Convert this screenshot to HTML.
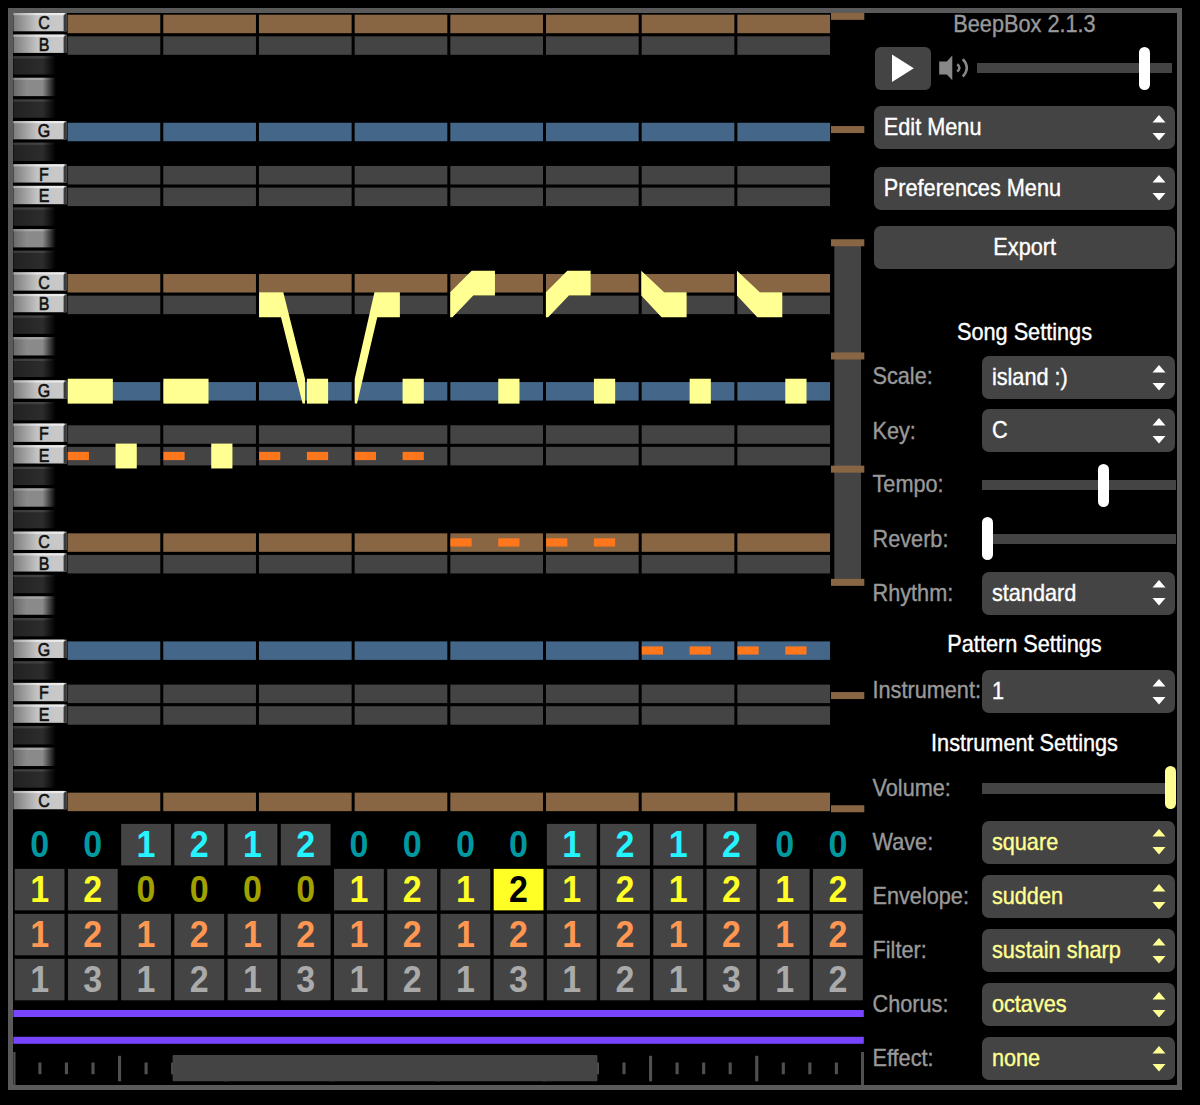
<!DOCTYPE html>
<html><head><meta charset="utf-8"><style>
html,body{margin:0;padding:0;background:#000;width:1200px;height:1105px;overflow:hidden}
body{position:relative;font-family:"Liberation Sans",sans-serif}
.lbl,.hdr,.sel span{-webkit-text-stroke:0.35px currentColor;transform:scaleY(1.06);transform-origin:0 19px}
.abs{position:absolute}
.frame{position:absolute;left:8px;top:8px;width:1173.5px;height:1082px;box-sizing:border-box;border:5px solid #5a5a5a}
.key{position:absolute;left:24.4px;width:40px;text-align:center;font-size:17.8px;line-height:18px;color:#111;-webkit-text-stroke:0.6px #111;transform:scaleX(0.9)}
.td{position:absolute;width:49.8px;height:41.5px;line-height:41.5px;text-align:center;font-size:34px;font-weight:bold;transform:scaleY(1.075)}
.lbl{position:absolute;left:872.5px;margin-top:0.7px;font-size:21.7px;color:#999;line-height:24px;white-space:nowrap}
.hdr{position:absolute;left:869.5px;width:310px;text-align:center;font-size:21.7px;color:#fff;line-height:24px}
.sel{position:absolute;background:#444;border-radius:7px;color:#fff;font-size:21.7px;line-height:24px;white-space:nowrap}
.sel span{position:absolute;left:9.5px;top:10px}
.sel svg{position:absolute;right:9.5px;top:8.5px}
.track{position:absolute;background:#444;height:10.5px}
.thumb{position:absolute;background:#fff;width:11px;border-radius:5.5px}
</style></head><body>
<div class="frame"></div>
<svg class="abs" style="left:0;top:0" width="1200" height="1105" viewBox="0 0 1200 1105">
<defs>
<linearGradient id="gw" x1="13.4" x2="66.4" gradientUnits="userSpaceOnUse"><stop offset="0" stop-color="#7c7c7c"/><stop offset="0.45" stop-color="#c4c4c4"/><stop offset="1" stop-color="#cacaca"/></linearGradient>
<linearGradient id="gwh" x1="13.4" x2="66.4" gradientUnits="userSpaceOnUse"><stop offset="0" stop-color="#a8a8a8"/><stop offset="0.45" stop-color="#e6e6e6"/><stop offset="1" stop-color="#eeeeee"/></linearGradient>
<linearGradient id="gm" x1="13.4" x2="66.4" gradientUnits="userSpaceOnUse"><stop offset="0" stop-color="#6a6a6a"/><stop offset="0.25" stop-color="#8a8a8a"/><stop offset="0.55" stop-color="#8a8a8a"/><stop offset="0.8" stop-color="#000"/></linearGradient>
<linearGradient id="gmh" x1="13.4" x2="66.4" gradientUnits="userSpaceOnUse"><stop offset="0" stop-color="#888"/><stop offset="0.3" stop-color="#a8a8a8"/><stop offset="0.55" stop-color="#a8a8a8"/><stop offset="0.8" stop-color="#000"/></linearGradient>
<linearGradient id="gd" x1="13.4" x2="66.4" gradientUnits="userSpaceOnUse"><stop offset="0" stop-color="#222"/><stop offset="0.55" stop-color="#2c2c2c"/><stop offset="0.8" stop-color="#000"/></linearGradient>
<linearGradient id="gdh" x1="13.4" x2="66.4" gradientUnits="userSpaceOnUse"><stop offset="0" stop-color="#3a3a3a"/><stop offset="0.55" stop-color="#444"/><stop offset="0.8" stop-color="#000"/></linearGradient>
</defs>
<rect x="13.4" y="13" width="53" height="18.3" fill="url(#gw)"/>
<rect x="13.4" y="13" width="50.5" height="2.2" fill="url(#gwh)"/>
<polygon points="63.6,15.4 66.4,13 66.4,31.3 63.6,31.3" fill="#3a3a3a"/>
<rect x="67.6" y="14.7" width="92.68" height="18.5" fill="#886644"/>
<rect x="163.28" y="14.7" width="92.68" height="18.5" fill="#886644"/>
<rect x="258.96" y="14.7" width="92.68" height="18.5" fill="#886644"/>
<rect x="354.64" y="14.7" width="92.68" height="18.5" fill="#886644"/>
<rect x="450.32" y="14.7" width="92.68" height="18.5" fill="#886644"/>
<rect x="546" y="14.7" width="92.68" height="18.5" fill="#886644"/>
<rect x="641.68" y="14.7" width="92.68" height="18.5" fill="#886644"/>
<rect x="737.36" y="14.7" width="92.68" height="18.5" fill="#886644"/>
<rect x="13.4" y="34.61" width="53" height="18.3" fill="url(#gw)"/>
<rect x="13.4" y="34.61" width="50.5" height="2.2" fill="url(#gwh)"/>
<polygon points="63.6,37.01 66.4,34.61 66.4,52.91 63.6,52.91" fill="#3a3a3a"/>
<rect x="67.6" y="36.31" width="92.68" height="18.5" fill="#444444"/>
<rect x="163.28" y="36.31" width="92.68" height="18.5" fill="#444444"/>
<rect x="258.96" y="36.31" width="92.68" height="18.5" fill="#444444"/>
<rect x="354.64" y="36.31" width="92.68" height="18.5" fill="#444444"/>
<rect x="450.32" y="36.31" width="92.68" height="18.5" fill="#444444"/>
<rect x="546" y="36.31" width="92.68" height="18.5" fill="#444444"/>
<rect x="641.68" y="36.31" width="92.68" height="18.5" fill="#444444"/>
<rect x="737.36" y="36.31" width="92.68" height="18.5" fill="#444444"/>
<rect x="13.4" y="56.22" width="53" height="18.3" fill="url(#gd)"/>
<rect x="13.4" y="56.22" width="53" height="2.2" fill="url(#gdh)"/>
<rect x="13.4" y="77.83" width="53" height="18.3" fill="url(#gm)"/>
<rect x="13.4" y="77.83" width="53" height="2.2" fill="url(#gmh)"/>
<rect x="13.4" y="99.44" width="53" height="18.3" fill="url(#gd)"/>
<rect x="13.4" y="99.44" width="53" height="2.2" fill="url(#gdh)"/>
<rect x="13.4" y="121.05" width="53" height="18.3" fill="url(#gw)"/>
<rect x="13.4" y="121.05" width="50.5" height="2.2" fill="url(#gwh)"/>
<polygon points="63.6,123.45 66.4,121.05 66.4,139.35 63.6,139.35" fill="#3a3a3a"/>
<rect x="67.6" y="122.75" width="92.68" height="18.5" fill="#446688"/>
<rect x="163.28" y="122.75" width="92.68" height="18.5" fill="#446688"/>
<rect x="258.96" y="122.75" width="92.68" height="18.5" fill="#446688"/>
<rect x="354.64" y="122.75" width="92.68" height="18.5" fill="#446688"/>
<rect x="450.32" y="122.75" width="92.68" height="18.5" fill="#446688"/>
<rect x="546" y="122.75" width="92.68" height="18.5" fill="#446688"/>
<rect x="641.68" y="122.75" width="92.68" height="18.5" fill="#446688"/>
<rect x="737.36" y="122.75" width="92.68" height="18.5" fill="#446688"/>
<rect x="13.4" y="142.66" width="53" height="18.3" fill="url(#gd)"/>
<rect x="13.4" y="142.66" width="53" height="2.2" fill="url(#gdh)"/>
<rect x="13.4" y="164.27" width="53" height="18.3" fill="url(#gw)"/>
<rect x="13.4" y="164.27" width="50.5" height="2.2" fill="url(#gwh)"/>
<polygon points="63.6,166.67 66.4,164.27 66.4,182.57 63.6,182.57" fill="#3a3a3a"/>
<rect x="67.6" y="165.97" width="92.68" height="18.5" fill="#444444"/>
<rect x="163.28" y="165.97" width="92.68" height="18.5" fill="#444444"/>
<rect x="258.96" y="165.97" width="92.68" height="18.5" fill="#444444"/>
<rect x="354.64" y="165.97" width="92.68" height="18.5" fill="#444444"/>
<rect x="450.32" y="165.97" width="92.68" height="18.5" fill="#444444"/>
<rect x="546" y="165.97" width="92.68" height="18.5" fill="#444444"/>
<rect x="641.68" y="165.97" width="92.68" height="18.5" fill="#444444"/>
<rect x="737.36" y="165.97" width="92.68" height="18.5" fill="#444444"/>
<rect x="13.4" y="185.88" width="53" height="18.3" fill="url(#gw)"/>
<rect x="13.4" y="185.88" width="50.5" height="2.2" fill="url(#gwh)"/>
<polygon points="63.6,188.28 66.4,185.88 66.4,204.18 63.6,204.18" fill="#3a3a3a"/>
<rect x="67.6" y="187.58" width="92.68" height="18.5" fill="#444444"/>
<rect x="163.28" y="187.58" width="92.68" height="18.5" fill="#444444"/>
<rect x="258.96" y="187.58" width="92.68" height="18.5" fill="#444444"/>
<rect x="354.64" y="187.58" width="92.68" height="18.5" fill="#444444"/>
<rect x="450.32" y="187.58" width="92.68" height="18.5" fill="#444444"/>
<rect x="546" y="187.58" width="92.68" height="18.5" fill="#444444"/>
<rect x="641.68" y="187.58" width="92.68" height="18.5" fill="#444444"/>
<rect x="737.36" y="187.58" width="92.68" height="18.5" fill="#444444"/>
<rect x="13.4" y="207.49" width="53" height="18.3" fill="url(#gd)"/>
<rect x="13.4" y="207.49" width="53" height="2.2" fill="url(#gdh)"/>
<rect x="13.4" y="229.1" width="53" height="18.3" fill="url(#gm)"/>
<rect x="13.4" y="229.1" width="53" height="2.2" fill="url(#gmh)"/>
<rect x="13.4" y="250.71" width="53" height="18.3" fill="url(#gd)"/>
<rect x="13.4" y="250.71" width="53" height="2.2" fill="url(#gdh)"/>
<rect x="13.4" y="272.32" width="53" height="18.3" fill="url(#gw)"/>
<rect x="13.4" y="272.32" width="50.5" height="2.2" fill="url(#gwh)"/>
<polygon points="63.6,274.72 66.4,272.32 66.4,290.62 63.6,290.62" fill="#3a3a3a"/>
<rect x="67.6" y="274.02" width="92.68" height="18.5" fill="#886644"/>
<rect x="163.28" y="274.02" width="92.68" height="18.5" fill="#886644"/>
<rect x="258.96" y="274.02" width="92.68" height="18.5" fill="#886644"/>
<rect x="354.64" y="274.02" width="92.68" height="18.5" fill="#886644"/>
<rect x="450.32" y="274.02" width="92.68" height="18.5" fill="#886644"/>
<rect x="546" y="274.02" width="92.68" height="18.5" fill="#886644"/>
<rect x="641.68" y="274.02" width="92.68" height="18.5" fill="#886644"/>
<rect x="737.36" y="274.02" width="92.68" height="18.5" fill="#886644"/>
<rect x="13.4" y="293.93" width="53" height="18.3" fill="url(#gw)"/>
<rect x="13.4" y="293.93" width="50.5" height="2.2" fill="url(#gwh)"/>
<polygon points="63.6,296.33 66.4,293.93 66.4,312.23 63.6,312.23" fill="#3a3a3a"/>
<rect x="67.6" y="295.63" width="92.68" height="18.5" fill="#444444"/>
<rect x="163.28" y="295.63" width="92.68" height="18.5" fill="#444444"/>
<rect x="258.96" y="295.63" width="92.68" height="18.5" fill="#444444"/>
<rect x="354.64" y="295.63" width="92.68" height="18.5" fill="#444444"/>
<rect x="450.32" y="295.63" width="92.68" height="18.5" fill="#444444"/>
<rect x="546" y="295.63" width="92.68" height="18.5" fill="#444444"/>
<rect x="641.68" y="295.63" width="92.68" height="18.5" fill="#444444"/>
<rect x="737.36" y="295.63" width="92.68" height="18.5" fill="#444444"/>
<rect x="13.4" y="315.54" width="53" height="18.3" fill="url(#gd)"/>
<rect x="13.4" y="315.54" width="53" height="2.2" fill="url(#gdh)"/>
<rect x="13.4" y="337.15" width="53" height="18.3" fill="url(#gm)"/>
<rect x="13.4" y="337.15" width="53" height="2.2" fill="url(#gmh)"/>
<rect x="13.4" y="358.76" width="53" height="18.3" fill="url(#gd)"/>
<rect x="13.4" y="358.76" width="53" height="2.2" fill="url(#gdh)"/>
<rect x="13.4" y="380.37" width="53" height="18.3" fill="url(#gw)"/>
<rect x="13.4" y="380.37" width="50.5" height="2.2" fill="url(#gwh)"/>
<polygon points="63.6,382.77 66.4,380.37 66.4,398.67 63.6,398.67" fill="#3a3a3a"/>
<rect x="67.6" y="382.07" width="92.68" height="18.5" fill="#446688"/>
<rect x="163.28" y="382.07" width="92.68" height="18.5" fill="#446688"/>
<rect x="258.96" y="382.07" width="92.68" height="18.5" fill="#446688"/>
<rect x="354.64" y="382.07" width="92.68" height="18.5" fill="#446688"/>
<rect x="450.32" y="382.07" width="92.68" height="18.5" fill="#446688"/>
<rect x="546" y="382.07" width="92.68" height="18.5" fill="#446688"/>
<rect x="641.68" y="382.07" width="92.68" height="18.5" fill="#446688"/>
<rect x="737.36" y="382.07" width="92.68" height="18.5" fill="#446688"/>
<rect x="13.4" y="401.98" width="53" height="18.3" fill="url(#gd)"/>
<rect x="13.4" y="401.98" width="53" height="2.2" fill="url(#gdh)"/>
<rect x="13.4" y="423.59" width="53" height="18.3" fill="url(#gw)"/>
<rect x="13.4" y="423.59" width="50.5" height="2.2" fill="url(#gwh)"/>
<polygon points="63.6,425.99 66.4,423.59 66.4,441.89 63.6,441.89" fill="#3a3a3a"/>
<rect x="67.6" y="425.29" width="92.68" height="18.5" fill="#444444"/>
<rect x="163.28" y="425.29" width="92.68" height="18.5" fill="#444444"/>
<rect x="258.96" y="425.29" width="92.68" height="18.5" fill="#444444"/>
<rect x="354.64" y="425.29" width="92.68" height="18.5" fill="#444444"/>
<rect x="450.32" y="425.29" width="92.68" height="18.5" fill="#444444"/>
<rect x="546" y="425.29" width="92.68" height="18.5" fill="#444444"/>
<rect x="641.68" y="425.29" width="92.68" height="18.5" fill="#444444"/>
<rect x="737.36" y="425.29" width="92.68" height="18.5" fill="#444444"/>
<rect x="13.4" y="445.2" width="53" height="18.3" fill="url(#gw)"/>
<rect x="13.4" y="445.2" width="50.5" height="2.2" fill="url(#gwh)"/>
<polygon points="63.6,447.6 66.4,445.2 66.4,463.5 63.6,463.5" fill="#3a3a3a"/>
<rect x="67.6" y="446.9" width="92.68" height="18.5" fill="#444444"/>
<rect x="163.28" y="446.9" width="92.68" height="18.5" fill="#444444"/>
<rect x="258.96" y="446.9" width="92.68" height="18.5" fill="#444444"/>
<rect x="354.64" y="446.9" width="92.68" height="18.5" fill="#444444"/>
<rect x="450.32" y="446.9" width="92.68" height="18.5" fill="#444444"/>
<rect x="546" y="446.9" width="92.68" height="18.5" fill="#444444"/>
<rect x="641.68" y="446.9" width="92.68" height="18.5" fill="#444444"/>
<rect x="737.36" y="446.9" width="92.68" height="18.5" fill="#444444"/>
<rect x="13.4" y="466.81" width="53" height="18.3" fill="url(#gd)"/>
<rect x="13.4" y="466.81" width="53" height="2.2" fill="url(#gdh)"/>
<rect x="13.4" y="488.42" width="53" height="18.3" fill="url(#gm)"/>
<rect x="13.4" y="488.42" width="53" height="2.2" fill="url(#gmh)"/>
<rect x="13.4" y="510.03" width="53" height="18.3" fill="url(#gd)"/>
<rect x="13.4" y="510.03" width="53" height="2.2" fill="url(#gdh)"/>
<rect x="13.4" y="531.64" width="53" height="18.3" fill="url(#gw)"/>
<rect x="13.4" y="531.64" width="50.5" height="2.2" fill="url(#gwh)"/>
<polygon points="63.6,534.04 66.4,531.64 66.4,549.94 63.6,549.94" fill="#3a3a3a"/>
<rect x="67.6" y="533.34" width="92.68" height="18.5" fill="#886644"/>
<rect x="163.28" y="533.34" width="92.68" height="18.5" fill="#886644"/>
<rect x="258.96" y="533.34" width="92.68" height="18.5" fill="#886644"/>
<rect x="354.64" y="533.34" width="92.68" height="18.5" fill="#886644"/>
<rect x="450.32" y="533.34" width="92.68" height="18.5" fill="#886644"/>
<rect x="546" y="533.34" width="92.68" height="18.5" fill="#886644"/>
<rect x="641.68" y="533.34" width="92.68" height="18.5" fill="#886644"/>
<rect x="737.36" y="533.34" width="92.68" height="18.5" fill="#886644"/>
<rect x="13.4" y="553.25" width="53" height="18.3" fill="url(#gw)"/>
<rect x="13.4" y="553.25" width="50.5" height="2.2" fill="url(#gwh)"/>
<polygon points="63.6,555.65 66.4,553.25 66.4,571.55 63.6,571.55" fill="#3a3a3a"/>
<rect x="67.6" y="554.95" width="92.68" height="18.5" fill="#444444"/>
<rect x="163.28" y="554.95" width="92.68" height="18.5" fill="#444444"/>
<rect x="258.96" y="554.95" width="92.68" height="18.5" fill="#444444"/>
<rect x="354.64" y="554.95" width="92.68" height="18.5" fill="#444444"/>
<rect x="450.32" y="554.95" width="92.68" height="18.5" fill="#444444"/>
<rect x="546" y="554.95" width="92.68" height="18.5" fill="#444444"/>
<rect x="641.68" y="554.95" width="92.68" height="18.5" fill="#444444"/>
<rect x="737.36" y="554.95" width="92.68" height="18.5" fill="#444444"/>
<rect x="13.4" y="574.86" width="53" height="18.3" fill="url(#gd)"/>
<rect x="13.4" y="574.86" width="53" height="2.2" fill="url(#gdh)"/>
<rect x="13.4" y="596.47" width="53" height="18.3" fill="url(#gm)"/>
<rect x="13.4" y="596.47" width="53" height="2.2" fill="url(#gmh)"/>
<rect x="13.4" y="618.08" width="53" height="18.3" fill="url(#gd)"/>
<rect x="13.4" y="618.08" width="53" height="2.2" fill="url(#gdh)"/>
<rect x="13.4" y="639.69" width="53" height="18.3" fill="url(#gw)"/>
<rect x="13.4" y="639.69" width="50.5" height="2.2" fill="url(#gwh)"/>
<polygon points="63.6,642.09 66.4,639.69 66.4,657.99 63.6,657.99" fill="#3a3a3a"/>
<rect x="67.6" y="641.39" width="92.68" height="18.5" fill="#446688"/>
<rect x="163.28" y="641.39" width="92.68" height="18.5" fill="#446688"/>
<rect x="258.96" y="641.39" width="92.68" height="18.5" fill="#446688"/>
<rect x="354.64" y="641.39" width="92.68" height="18.5" fill="#446688"/>
<rect x="450.32" y="641.39" width="92.68" height="18.5" fill="#446688"/>
<rect x="546" y="641.39" width="92.68" height="18.5" fill="#446688"/>
<rect x="641.68" y="641.39" width="92.68" height="18.5" fill="#446688"/>
<rect x="737.36" y="641.39" width="92.68" height="18.5" fill="#446688"/>
<rect x="13.4" y="661.3" width="53" height="18.3" fill="url(#gd)"/>
<rect x="13.4" y="661.3" width="53" height="2.2" fill="url(#gdh)"/>
<rect x="13.4" y="682.91" width="53" height="18.3" fill="url(#gw)"/>
<rect x="13.4" y="682.91" width="50.5" height="2.2" fill="url(#gwh)"/>
<polygon points="63.6,685.31 66.4,682.91 66.4,701.21 63.6,701.21" fill="#3a3a3a"/>
<rect x="67.6" y="684.61" width="92.68" height="18.5" fill="#444444"/>
<rect x="163.28" y="684.61" width="92.68" height="18.5" fill="#444444"/>
<rect x="258.96" y="684.61" width="92.68" height="18.5" fill="#444444"/>
<rect x="354.64" y="684.61" width="92.68" height="18.5" fill="#444444"/>
<rect x="450.32" y="684.61" width="92.68" height="18.5" fill="#444444"/>
<rect x="546" y="684.61" width="92.68" height="18.5" fill="#444444"/>
<rect x="641.68" y="684.61" width="92.68" height="18.5" fill="#444444"/>
<rect x="737.36" y="684.61" width="92.68" height="18.5" fill="#444444"/>
<rect x="13.4" y="704.52" width="53" height="18.3" fill="url(#gw)"/>
<rect x="13.4" y="704.52" width="50.5" height="2.2" fill="url(#gwh)"/>
<polygon points="63.6,706.92 66.4,704.52 66.4,722.82 63.6,722.82" fill="#3a3a3a"/>
<rect x="67.6" y="706.22" width="92.68" height="18.5" fill="#444444"/>
<rect x="163.28" y="706.22" width="92.68" height="18.5" fill="#444444"/>
<rect x="258.96" y="706.22" width="92.68" height="18.5" fill="#444444"/>
<rect x="354.64" y="706.22" width="92.68" height="18.5" fill="#444444"/>
<rect x="450.32" y="706.22" width="92.68" height="18.5" fill="#444444"/>
<rect x="546" y="706.22" width="92.68" height="18.5" fill="#444444"/>
<rect x="641.68" y="706.22" width="92.68" height="18.5" fill="#444444"/>
<rect x="737.36" y="706.22" width="92.68" height="18.5" fill="#444444"/>
<rect x="13.4" y="726.13" width="53" height="18.3" fill="url(#gd)"/>
<rect x="13.4" y="726.13" width="53" height="2.2" fill="url(#gdh)"/>
<rect x="13.4" y="747.74" width="53" height="18.3" fill="url(#gm)"/>
<rect x="13.4" y="747.74" width="53" height="2.2" fill="url(#gmh)"/>
<rect x="13.4" y="769.35" width="53" height="18.3" fill="url(#gd)"/>
<rect x="13.4" y="769.35" width="53" height="2.2" fill="url(#gdh)"/>
<rect x="13.4" y="790.96" width="53" height="18.3" fill="url(#gw)"/>
<rect x="13.4" y="790.96" width="50.5" height="2.2" fill="url(#gwh)"/>
<polygon points="63.6,793.36 66.4,790.96 66.4,809.26 63.6,809.26" fill="#3a3a3a"/>
<rect x="67.6" y="792.66" width="92.68" height="18.5" fill="#886644"/>
<rect x="163.28" y="792.66" width="92.68" height="18.5" fill="#886644"/>
<rect x="258.96" y="792.66" width="92.68" height="18.5" fill="#886644"/>
<rect x="354.64" y="792.66" width="92.68" height="18.5" fill="#886644"/>
<rect x="450.32" y="792.66" width="92.68" height="18.5" fill="#886644"/>
<rect x="546" y="792.66" width="92.68" height="18.5" fill="#886644"/>
<rect x="641.68" y="792.66" width="92.68" height="18.5" fill="#886644"/>
<rect x="737.36" y="792.66" width="92.68" height="18.5" fill="#886644"/>
<rect x="115.54" y="443.56" width="21.22" height="24.9" fill="#ffff92"/>
<rect x="211.22" y="443.56" width="21.22" height="24.9" fill="#ffff92"/>
<rect x="306.9" y="378.73" width="21.22" height="24.9" fill="#ffff92"/>
<rect x="402.58" y="378.73" width="21.22" height="24.9" fill="#ffff92"/>
<rect x="498.26" y="378.73" width="21.22" height="24.9" fill="#ffff92"/>
<rect x="593.94" y="378.73" width="21.22" height="24.9" fill="#ffff92"/>
<rect x="689.62" y="378.73" width="21.22" height="24.9" fill="#ffff92"/>
<rect x="785.3" y="378.73" width="21.22" height="24.9" fill="#ffff92"/>
<rect x="67.7" y="378.73" width="45.14" height="24.9" fill="#ffff92"/>
<rect x="163.38" y="378.73" width="45.14" height="24.9" fill="#ffff92"/>
<polygon points="259.06,292.29 283.28,292.29 305,378.73 305,403.62 302.6,403.62 280.98,317.19 259.06,317.19" fill="#ffff92"/>
<polygon points="354.74,403.62 354.74,378.73 374.46,292.29 399.88,292.29 399.88,317.19 377.26,317.19 357.04,403.62" fill="#ffff92"/>
<polygon points="450.22,317.19 450.22,292.29 471.64,270.68 494.96,270.68 494.96,295.57 473.24,295.57 452.42,317.19" fill="#ffff92"/>
<polygon points="545.9,317.19 545.9,292.29 567.32,270.68 590.64,270.68 590.64,295.57 568.92,295.57 548.1,317.19" fill="#ffff92"/>
<polygon points="641.28,270.68 664.1,292.29 686.62,292.29 686.62,317.19 661.6,317.19 641.28,295.57" fill="#ffff92"/>
<polygon points="736.96,270.68 759.78,292.29 782.3,292.29 782.3,317.19 757.28,317.19 736.96,295.57" fill="#ffff92"/>
<rect x="67.7" y="451.9" width="21.22" height="8.2" fill="#ff771c"/>
<rect x="163.38" y="451.9" width="21.22" height="8.2" fill="#ff771c"/>
<rect x="259.06" y="451.9" width="21.22" height="8.2" fill="#ff771c"/>
<rect x="306.9" y="451.9" width="21.22" height="8.2" fill="#ff771c"/>
<rect x="354.74" y="451.9" width="21.22" height="8.2" fill="#ff771c"/>
<rect x="402.58" y="451.9" width="21.22" height="8.2" fill="#ff771c"/>
<rect x="450.42" y="538.34" width="21.22" height="8.2" fill="#ff771c"/>
<rect x="498.26" y="538.34" width="21.22" height="8.2" fill="#ff771c"/>
<rect x="546.1" y="538.34" width="21.22" height="8.2" fill="#ff771c"/>
<rect x="593.94" y="538.34" width="21.22" height="8.2" fill="#ff771c"/>
<rect x="641.78" y="646.39" width="21.22" height="8.2" fill="#ff771c"/>
<rect x="689.62" y="646.39" width="21.22" height="8.2" fill="#ff771c"/>
<rect x="737.46" y="646.39" width="21.22" height="8.2" fill="#ff771c"/>
<rect x="785.3" y="646.39" width="21.22" height="8.2" fill="#ff771c"/>
<rect x="834.3" y="242" width="26.7" height="341" fill="#444444"/>
<rect x="831" y="12.85" width="33.3" height="7" fill="#886644"/>
<rect x="831" y="126.05" width="33.3" height="7" fill="#886644"/>
<rect x="831" y="239.25" width="33.3" height="7" fill="#886644"/>
<rect x="831" y="352.45" width="33.3" height="7" fill="#886644"/>
<rect x="831" y="465.65" width="33.3" height="7" fill="#886644"/>
<rect x="831" y="578.85" width="33.3" height="7" fill="#886644"/>
<rect x="831" y="692.05" width="33.3" height="7" fill="#886644"/>
<rect x="831" y="805.25" width="33.3" height="7" fill="#886644"/>
<rect x="121.14" y="823.9" width="49.8" height="41.5" fill="#444444"/>
<rect x="174.36" y="823.9" width="49.8" height="41.5" fill="#444444"/>
<rect x="227.58" y="823.9" width="49.8" height="41.5" fill="#444444"/>
<rect x="280.8" y="823.9" width="49.8" height="41.5" fill="#444444"/>
<rect x="546.9" y="823.9" width="49.8" height="41.5" fill="#444444"/>
<rect x="600.12" y="823.9" width="49.8" height="41.5" fill="#444444"/>
<rect x="653.34" y="823.9" width="49.8" height="41.5" fill="#444444"/>
<rect x="706.56" y="823.9" width="49.8" height="41.5" fill="#444444"/>
<rect x="14.7" y="868.87" width="49.8" height="41.5" fill="#444444"/>
<rect x="67.92" y="868.87" width="49.8" height="41.5" fill="#444444"/>
<rect x="334.02" y="868.87" width="49.8" height="41.5" fill="#444444"/>
<rect x="387.24" y="868.87" width="49.8" height="41.5" fill="#444444"/>
<rect x="440.46" y="868.87" width="49.8" height="41.5" fill="#444444"/>
<rect x="493.68" y="868.87" width="49.8" height="41.5" fill="#ffff25"/>
<rect x="546.9" y="868.87" width="49.8" height="41.5" fill="#444444"/>
<rect x="600.12" y="868.87" width="49.8" height="41.5" fill="#444444"/>
<rect x="653.34" y="868.87" width="49.8" height="41.5" fill="#444444"/>
<rect x="706.56" y="868.87" width="49.8" height="41.5" fill="#444444"/>
<rect x="759.78" y="868.87" width="49.8" height="41.5" fill="#444444"/>
<rect x="813" y="868.87" width="49.8" height="41.5" fill="#444444"/>
<rect x="14.7" y="913.84" width="49.8" height="41.5" fill="#444444"/>
<rect x="67.92" y="913.84" width="49.8" height="41.5" fill="#444444"/>
<rect x="121.14" y="913.84" width="49.8" height="41.5" fill="#444444"/>
<rect x="174.36" y="913.84" width="49.8" height="41.5" fill="#444444"/>
<rect x="227.58" y="913.84" width="49.8" height="41.5" fill="#444444"/>
<rect x="280.8" y="913.84" width="49.8" height="41.5" fill="#444444"/>
<rect x="334.02" y="913.84" width="49.8" height="41.5" fill="#444444"/>
<rect x="387.24" y="913.84" width="49.8" height="41.5" fill="#444444"/>
<rect x="440.46" y="913.84" width="49.8" height="41.5" fill="#444444"/>
<rect x="493.68" y="913.84" width="49.8" height="41.5" fill="#444444"/>
<rect x="546.9" y="913.84" width="49.8" height="41.5" fill="#444444"/>
<rect x="600.12" y="913.84" width="49.8" height="41.5" fill="#444444"/>
<rect x="653.34" y="913.84" width="49.8" height="41.5" fill="#444444"/>
<rect x="706.56" y="913.84" width="49.8" height="41.5" fill="#444444"/>
<rect x="759.78" y="913.84" width="49.8" height="41.5" fill="#444444"/>
<rect x="813" y="913.84" width="49.8" height="41.5" fill="#444444"/>
<rect x="14.7" y="958.81" width="49.8" height="41.5" fill="#444444"/>
<rect x="67.92" y="958.81" width="49.8" height="41.5" fill="#444444"/>
<rect x="121.14" y="958.81" width="49.8" height="41.5" fill="#444444"/>
<rect x="174.36" y="958.81" width="49.8" height="41.5" fill="#444444"/>
<rect x="227.58" y="958.81" width="49.8" height="41.5" fill="#444444"/>
<rect x="280.8" y="958.81" width="49.8" height="41.5" fill="#444444"/>
<rect x="334.02" y="958.81" width="49.8" height="41.5" fill="#444444"/>
<rect x="387.24" y="958.81" width="49.8" height="41.5" fill="#444444"/>
<rect x="440.46" y="958.81" width="49.8" height="41.5" fill="#444444"/>
<rect x="493.68" y="958.81" width="49.8" height="41.5" fill="#444444"/>
<rect x="546.9" y="958.81" width="49.8" height="41.5" fill="#444444"/>
<rect x="600.12" y="958.81" width="49.8" height="41.5" fill="#444444"/>
<rect x="653.34" y="958.81" width="49.8" height="41.5" fill="#444444"/>
<rect x="706.56" y="958.81" width="49.8" height="41.5" fill="#444444"/>
<rect x="759.78" y="958.81" width="49.8" height="41.5" fill="#444444"/>
<rect x="813" y="958.81" width="49.8" height="41.5" fill="#444444"/>
<rect x="13.3" y="1010" width="850.5" height="7" fill="#7744ff"/>
<rect x="13.3" y="1036.8" width="850.5" height="7" fill="#7744ff"/>
<rect x="13.3" y="1052" width="2.2" height="33" fill="#505050"/>
<rect x="861" y="1052" width="3" height="33" fill="#505050"/>
<rect x="38.35" y="1062.5" width="3.1" height="11.7" fill="#505050"/>
<rect x="64.9" y="1062.5" width="3.1" height="11.7" fill="#505050"/>
<rect x="91.45" y="1062.5" width="3.1" height="11.7" fill="#505050"/>
<rect x="118" y="1055.8" width="3.1" height="25.5" fill="#505050"/>
<rect x="144.55" y="1062.5" width="3.1" height="11.7" fill="#505050"/>
<rect x="171.1" y="1062.5" width="3.1" height="11.7" fill="#505050"/>
<rect x="197.65" y="1062.5" width="3.1" height="11.7" fill="#505050"/>
<rect x="224.2" y="1055.8" width="3.1" height="25.5" fill="#505050"/>
<rect x="250.75" y="1062.5" width="3.1" height="11.7" fill="#505050"/>
<rect x="277.3" y="1062.5" width="3.1" height="11.7" fill="#505050"/>
<rect x="303.85" y="1062.5" width="3.1" height="11.7" fill="#505050"/>
<rect x="330.4" y="1055.8" width="3.1" height="25.5" fill="#505050"/>
<rect x="356.95" y="1062.5" width="3.1" height="11.7" fill="#505050"/>
<rect x="383.5" y="1062.5" width="3.1" height="11.7" fill="#505050"/>
<rect x="410.05" y="1062.5" width="3.1" height="11.7" fill="#505050"/>
<rect x="436.6" y="1055.8" width="3.1" height="25.5" fill="#505050"/>
<rect x="463.15" y="1062.5" width="3.1" height="11.7" fill="#505050"/>
<rect x="489.7" y="1062.5" width="3.1" height="11.7" fill="#505050"/>
<rect x="516.25" y="1062.5" width="3.1" height="11.7" fill="#505050"/>
<rect x="542.8" y="1055.8" width="3.1" height="25.5" fill="#505050"/>
<rect x="569.35" y="1062.5" width="3.1" height="11.7" fill="#505050"/>
<rect x="595.9" y="1062.5" width="3.1" height="11.7" fill="#505050"/>
<rect x="622.45" y="1062.5" width="3.1" height="11.7" fill="#505050"/>
<rect x="649" y="1055.8" width="3.1" height="25.5" fill="#505050"/>
<rect x="675.55" y="1062.5" width="3.1" height="11.7" fill="#505050"/>
<rect x="702.1" y="1062.5" width="3.1" height="11.7" fill="#505050"/>
<rect x="728.65" y="1062.5" width="3.1" height="11.7" fill="#505050"/>
<rect x="755.2" y="1055.8" width="3.1" height="25.5" fill="#505050"/>
<rect x="781.75" y="1062.5" width="3.1" height="11.7" fill="#505050"/>
<rect x="808.3" y="1062.5" width="3.1" height="11.7" fill="#505050"/>
<rect x="834.85" y="1062.5" width="3.1" height="11.7" fill="#505050"/>
<rect x="172.6" y="1055" width="424.8" height="26.3" rx="1" fill="#444444"/>
</svg>
<div class="key" style="top:14.4px">C</div>
<div class="key" style="top:36.01px">B</div>
<div class="key" style="top:122.45px">G</div>
<div class="key" style="top:165.67px">F</div>
<div class="key" style="top:187.28px">E</div>
<div class="key" style="top:273.72px">C</div>
<div class="key" style="top:295.33px">B</div>
<div class="key" style="top:381.77px">G</div>
<div class="key" style="top:424.99px">F</div>
<div class="key" style="top:446.6px">E</div>
<div class="key" style="top:533.04px">C</div>
<div class="key" style="top:554.65px">B</div>
<div class="key" style="top:641.09px">G</div>
<div class="key" style="top:684.31px">F</div>
<div class="key" style="top:705.92px">E</div>
<div class="key" style="top:792.36px">C</div>
<div class="td" style="left:14.7px;top:823.9px;color:#0099a1">0</div>
<div class="td" style="left:67.92px;top:823.9px;color:#0099a1">0</div>
<div class="td" style="left:121.14px;top:823.9px;color:#25f3ff">1</div>
<div class="td" style="left:174.36px;top:823.9px;color:#25f3ff">2</div>
<div class="td" style="left:227.58px;top:823.9px;color:#25f3ff">1</div>
<div class="td" style="left:280.8px;top:823.9px;color:#25f3ff">2</div>
<div class="td" style="left:334.02px;top:823.9px;color:#0099a1">0</div>
<div class="td" style="left:387.24px;top:823.9px;color:#0099a1">0</div>
<div class="td" style="left:440.46px;top:823.9px;color:#0099a1">0</div>
<div class="td" style="left:493.68px;top:823.9px;color:#0099a1">0</div>
<div class="td" style="left:546.9px;top:823.9px;color:#25f3ff">1</div>
<div class="td" style="left:600.12px;top:823.9px;color:#25f3ff">2</div>
<div class="td" style="left:653.34px;top:823.9px;color:#25f3ff">1</div>
<div class="td" style="left:706.56px;top:823.9px;color:#25f3ff">2</div>
<div class="td" style="left:759.78px;top:823.9px;color:#0099a1">0</div>
<div class="td" style="left:813px;top:823.9px;color:#0099a1">0</div>
<div class="td" style="left:14.7px;top:868.87px;color:#ffff25">1</div>
<div class="td" style="left:67.92px;top:868.87px;color:#ffff25">2</div>
<div class="td" style="left:121.14px;top:868.87px;color:#a1a100">0</div>
<div class="td" style="left:174.36px;top:868.87px;color:#a1a100">0</div>
<div class="td" style="left:227.58px;top:868.87px;color:#a1a100">0</div>
<div class="td" style="left:280.8px;top:868.87px;color:#a1a100">0</div>
<div class="td" style="left:334.02px;top:868.87px;color:#ffff25">1</div>
<div class="td" style="left:387.24px;top:868.87px;color:#ffff25">2</div>
<div class="td" style="left:440.46px;top:868.87px;color:#ffff25">1</div>
<div class="td" style="left:493.68px;top:868.87px;color:#000000">2</div>
<div class="td" style="left:546.9px;top:868.87px;color:#ffff25">1</div>
<div class="td" style="left:600.12px;top:868.87px;color:#ffff25">2</div>
<div class="td" style="left:653.34px;top:868.87px;color:#ffff25">1</div>
<div class="td" style="left:706.56px;top:868.87px;color:#ffff25">2</div>
<div class="td" style="left:759.78px;top:868.87px;color:#ffff25">1</div>
<div class="td" style="left:813px;top:868.87px;color:#ffff25">2</div>
<div class="td" style="left:14.7px;top:913.84px;color:#ff9752">1</div>
<div class="td" style="left:67.92px;top:913.84px;color:#ff9752">2</div>
<div class="td" style="left:121.14px;top:913.84px;color:#ff9752">1</div>
<div class="td" style="left:174.36px;top:913.84px;color:#ff9752">2</div>
<div class="td" style="left:227.58px;top:913.84px;color:#ff9752">1</div>
<div class="td" style="left:280.8px;top:913.84px;color:#ff9752">2</div>
<div class="td" style="left:334.02px;top:913.84px;color:#ff9752">1</div>
<div class="td" style="left:387.24px;top:913.84px;color:#ff9752">2</div>
<div class="td" style="left:440.46px;top:913.84px;color:#ff9752">1</div>
<div class="td" style="left:493.68px;top:913.84px;color:#ff9752">2</div>
<div class="td" style="left:546.9px;top:913.84px;color:#ff9752">1</div>
<div class="td" style="left:600.12px;top:913.84px;color:#ff9752">2</div>
<div class="td" style="left:653.34px;top:913.84px;color:#ff9752">1</div>
<div class="td" style="left:706.56px;top:913.84px;color:#ff9752">2</div>
<div class="td" style="left:759.78px;top:913.84px;color:#ff9752">1</div>
<div class="td" style="left:813px;top:913.84px;color:#ff9752">2</div>
<div class="td" style="left:14.7px;top:958.81px;color:#aaaaaa">1</div>
<div class="td" style="left:67.92px;top:958.81px;color:#aaaaaa">3</div>
<div class="td" style="left:121.14px;top:958.81px;color:#aaaaaa">1</div>
<div class="td" style="left:174.36px;top:958.81px;color:#aaaaaa">2</div>
<div class="td" style="left:227.58px;top:958.81px;color:#aaaaaa">1</div>
<div class="td" style="left:280.8px;top:958.81px;color:#aaaaaa">3</div>
<div class="td" style="left:334.02px;top:958.81px;color:#aaaaaa">1</div>
<div class="td" style="left:387.24px;top:958.81px;color:#aaaaaa">2</div>
<div class="td" style="left:440.46px;top:958.81px;color:#aaaaaa">1</div>
<div class="td" style="left:493.68px;top:958.81px;color:#aaaaaa">3</div>
<div class="td" style="left:546.9px;top:958.81px;color:#aaaaaa">1</div>
<div class="td" style="left:600.12px;top:958.81px;color:#aaaaaa">2</div>
<div class="td" style="left:653.34px;top:958.81px;color:#aaaaaa">1</div>
<div class="td" style="left:706.56px;top:958.81px;color:#aaaaaa">3</div>
<div class="td" style="left:759.78px;top:958.81px;color:#aaaaaa">1</div>
<div class="td" style="left:813px;top:958.81px;color:#aaaaaa">2</div>
<div class="hdr" style="top:13px;color:#999">BeepBox 2.1.3</div>
<div class="abs" style="left:874.5px;top:46.5px;width:56.3px;height:43px;background:#444;border-radius:6px"></div>
<svg class="abs" style="left:0;top:0" width="1200" height="100"><polygon points="892,54.5 913.8,68.2 892,82" fill="#fff"/><polygon points="939.2,61.4 946.8,61.4 952.3,55.4 952.3,80.2 946.8,74.4 939.2,74.4" fill="#888"/><path d="M957.3,64.2 Q961.6,67.8 957.3,71.6" stroke="#888" stroke-width="2.5" fill="none"/><path d="M962.8,59.2 Q970.8,67.8 962.8,76.6" stroke="#888" stroke-width="2.5" fill="none"/></svg>
<div class="track" style="left:977px;top:62.5px;width:194.7px"></div>
<div class="thumb" style="left:1139px;top:46.8px;height:43.3px"></div>
<div class="sel" style="left:874.3px;top:106.3px;width:300.8px;height:43px"><span style="color:#fff">Edit Menu</span><svg width="14" height="26" viewBox="0 0 14 26"><polygon points="7,0 13.5,7.6 0.5,7.6" fill="#fff"/><polygon points="0.5,17.9 13.5,17.9 7,25.5" fill="#fff"/></svg></div>
<div class="sel" style="left:874.3px;top:166.6px;width:300.8px;height:43px"><span style="color:#fff">Preferences Menu</span><svg width="14" height="26" viewBox="0 0 14 26"><polygon points="7,0 13.5,7.6 0.5,7.6" fill="#fff"/><polygon points="0.5,17.9 13.5,17.9 7,25.5" fill="#fff"/></svg></div>
<div class="sel" style="left:874.3px;top:226.1px;width:300.8px;height:43px"><span style="left:0;width:100%;text-align:center;color:#fff">Export</span></div>
<div class="hdr" style="top:321px">Song Settings</div>
<div class="lbl" style="top:364.3px">Scale:</div>
<div class="sel" style="left:982.4px;top:356px;width:192.7px;height:43px"><span style="color:#fff">island :)</span><svg width="14" height="26" viewBox="0 0 14 26"><polygon points="7,0 13.5,7.6 0.5,7.6" fill="#fff"/><polygon points="0.5,17.9 13.5,17.9 7,25.5" fill="#fff"/></svg></div>
<div class="lbl" style="top:419px">Key:</div>
<div class="sel" style="left:982.4px;top:409.3px;width:192.7px;height:43px"><span style="color:#fff">C</span><svg width="14" height="26" viewBox="0 0 14 26"><polygon points="7,0 13.5,7.6 0.5,7.6" fill="#fff"/><polygon points="0.5,17.9 13.5,17.9 7,25.5" fill="#fff"/></svg></div>
<div class="lbl" style="top:472.7px">Tempo:</div>
<div class="track" style="left:982.4px;top:479.8px;width:194px"></div>
<div class="thumb" style="left:1098px;top:463.6px;height:43.1px"></div>
<div class="lbl" style="top:527.8px">Reverb:</div>
<div class="track" style="left:982.4px;top:533.5px;width:194px"></div>
<div class="thumb" style="left:981.8px;top:516.8px;height:43.1px"></div>
<div class="lbl" style="top:580.9px">Rhythm:</div>
<div class="sel" style="left:982.4px;top:571.9px;width:192.7px;height:43px"><span style="color:#fff">standard</span><svg width="14" height="26" viewBox="0 0 14 26"><polygon points="7,0 13.5,7.6 0.5,7.6" fill="#fff"/><polygon points="0.5,17.9 13.5,17.9 7,25.5" fill="#fff"/></svg></div>
<div class="hdr" style="top:633.3px">Pattern Settings</div>
<div class="lbl" style="top:678.8px">Instrument:</div>
<div class="sel" style="left:982.4px;top:670px;width:192.7px;height:43px"><span style="color:#fff">1</span><svg width="14" height="26" viewBox="0 0 14 26"><polygon points="7,0 13.5,7.6 0.5,7.6" fill="#fff"/><polygon points="0.5,17.9 13.5,17.9 7,25.5" fill="#fff"/></svg></div>
<div class="hdr" style="top:731.8px">Instrument Settings</div>
<div class="lbl" style="top:776.6px">Volume:</div>
<div class="track" style="left:982.4px;top:783px;width:194px"></div>
<div class="thumb" style="left:1164.8px;top:766.3px;height:43.1px;background:#ffff92"></div>
<div class="lbl" style="top:830.1px">Wave:</div>
<div class="sel" style="left:982.4px;top:820.9px;width:192.7px;height:43px"><span style="color:#ffff92">square</span><svg width="14" height="26" viewBox="0 0 14 26"><polygon points="7,0 13.5,7.6 0.5,7.6" fill="#ffff92"/><polygon points="0.5,17.9 13.5,17.9 7,25.5" fill="#ffff92"/></svg></div>
<div class="lbl" style="top:884.1px">Envelope:</div>
<div class="sel" style="left:982.4px;top:875px;width:192.7px;height:43px"><span style="color:#ffff92">sudden</span><svg width="14" height="26" viewBox="0 0 14 26"><polygon points="7,0 13.5,7.6 0.5,7.6" fill="#ffff92"/><polygon points="0.5,17.9 13.5,17.9 7,25.5" fill="#ffff92"/></svg></div>
<div class="lbl" style="top:938.1px">Filter:</div>
<div class="sel" style="left:982.4px;top:929.1px;width:192.7px;height:43px"><span style="color:#ffff92">sustain sharp</span><svg width="14" height="26" viewBox="0 0 14 26"><polygon points="7,0 13.5,7.6 0.5,7.6" fill="#ffff92"/><polygon points="0.5,17.9 13.5,17.9 7,25.5" fill="#ffff92"/></svg></div>
<div class="lbl" style="top:992.1px">Chorus:</div>
<div class="sel" style="left:982.4px;top:983.2px;width:192.7px;height:43px"><span style="color:#ffff92">octaves</span><svg width="14" height="26" viewBox="0 0 14 26"><polygon points="7,0 13.5,7.6 0.5,7.6" fill="#ffff92"/><polygon points="0.5,17.9 13.5,17.9 7,25.5" fill="#ffff92"/></svg></div>
<div class="lbl" style="top:1046.1px">Effect:</div>
<div class="sel" style="left:982.4px;top:1037.3px;width:192.7px;height:43px"><span style="color:#ffff92">none</span><svg width="14" height="26" viewBox="0 0 14 26"><polygon points="7,0 13.5,7.6 0.5,7.6" fill="#ffff92"/><polygon points="0.5,17.9 13.5,17.9 7,25.5" fill="#ffff92"/></svg></div>
</body></html>
